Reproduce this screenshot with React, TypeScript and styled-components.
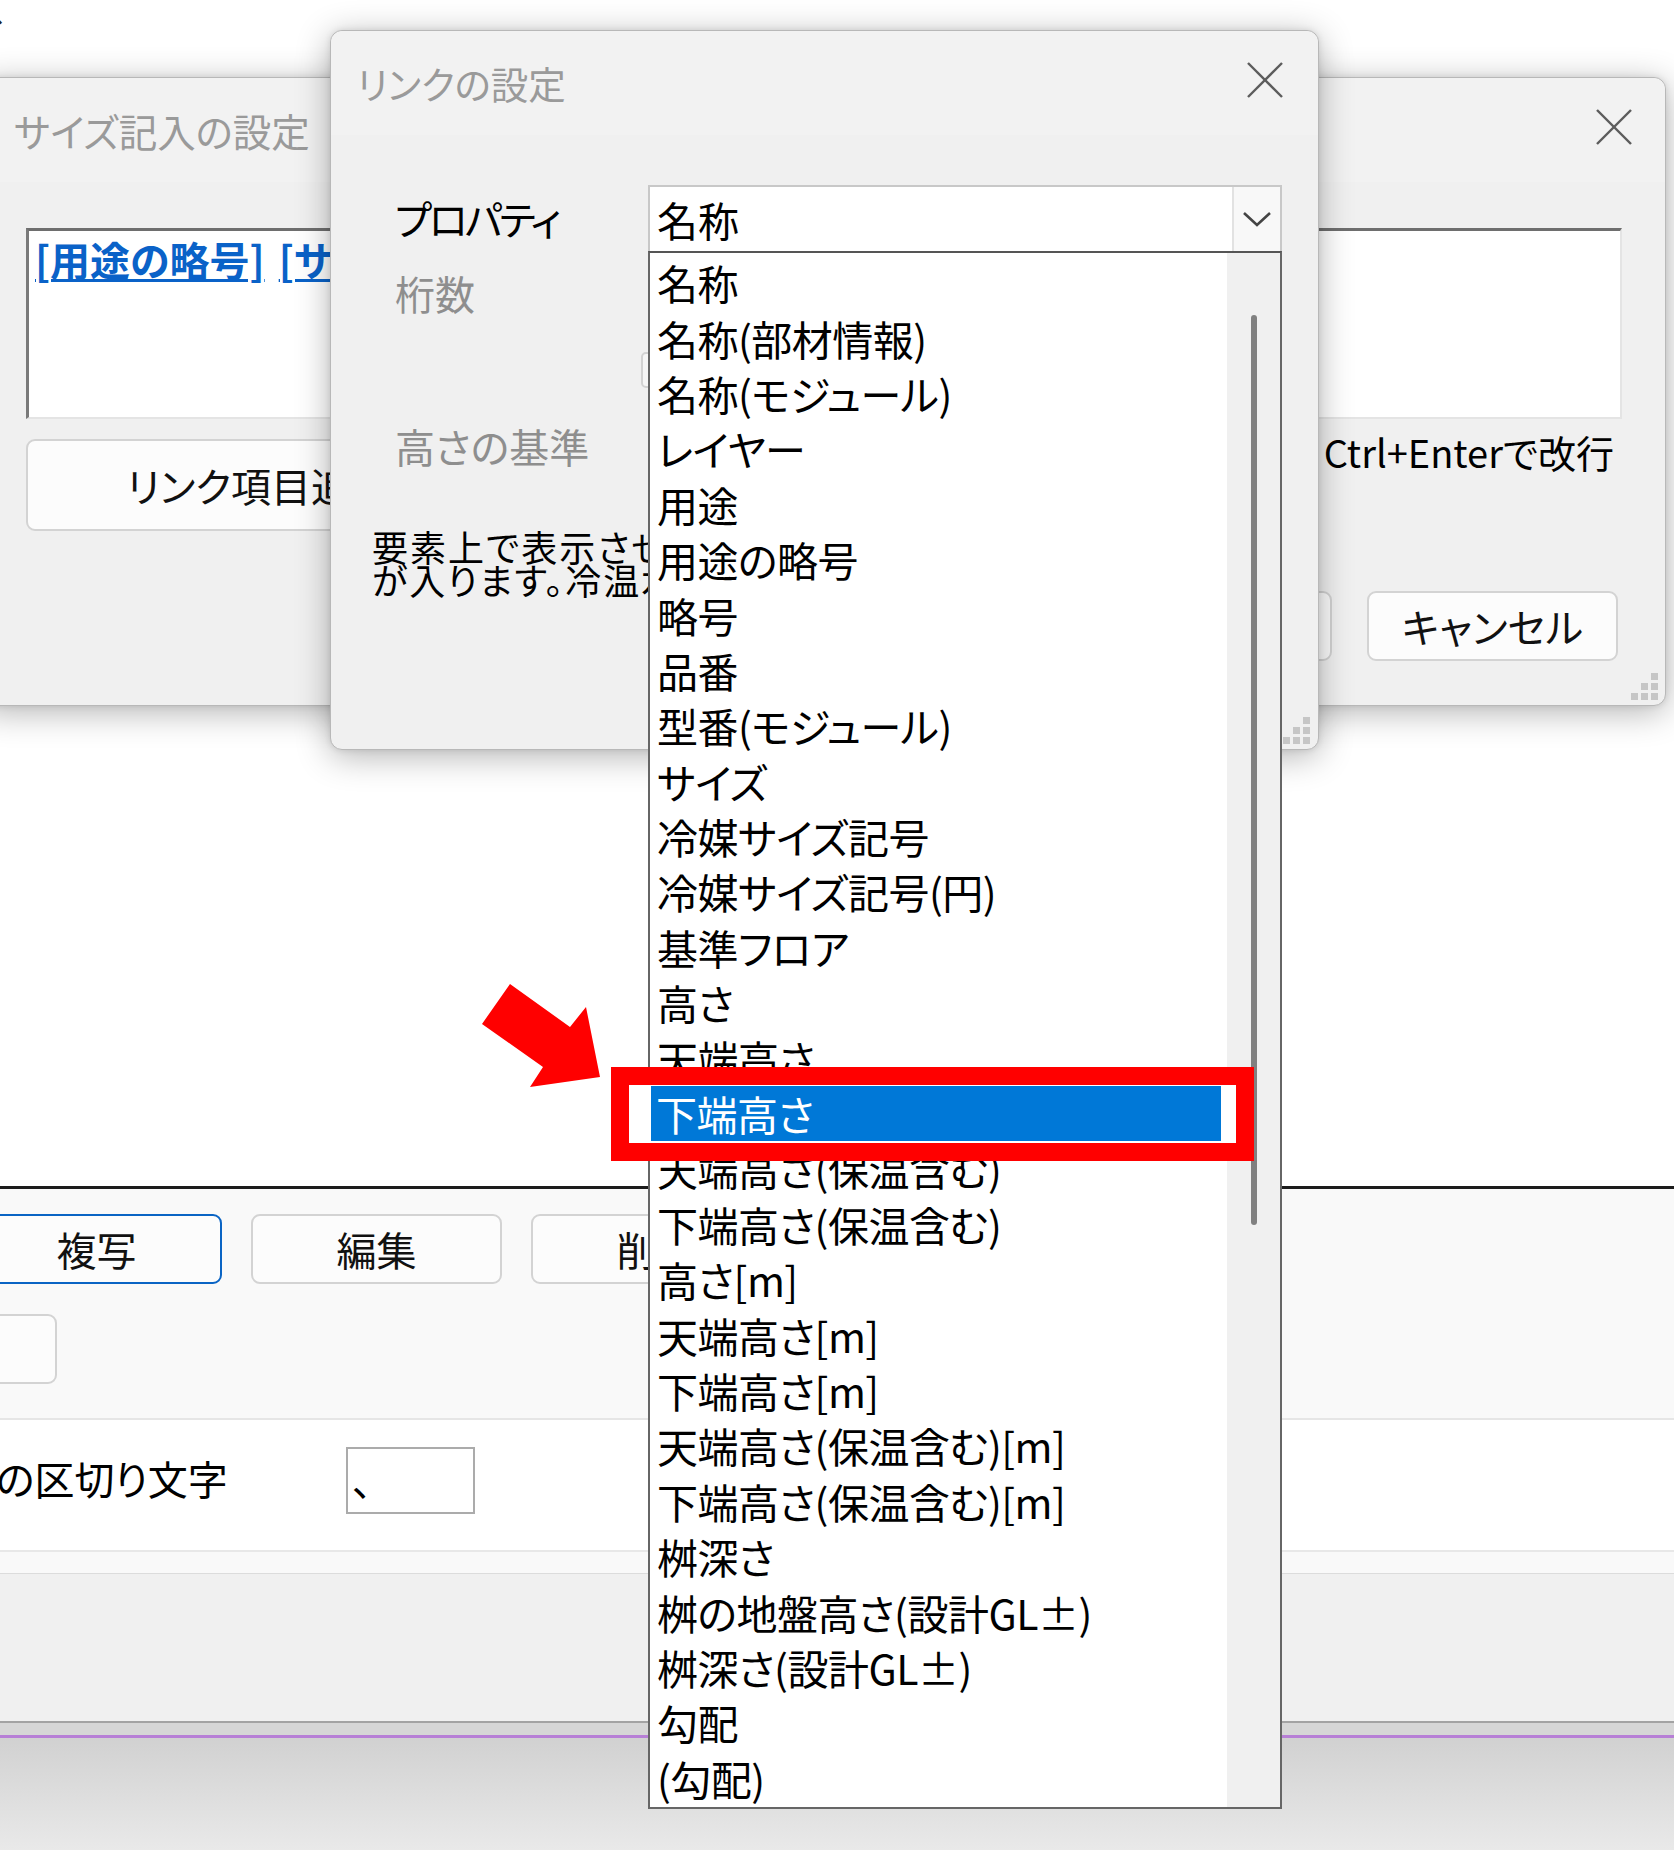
import React from 'react';
import styled, { createGlobalStyle } from 'styled-components';

const GlobalStyle = createGlobalStyle`
  html, body { margin: 0; padding: 0; }
  body {
    width: 1674px; height: 1850px; overflow: hidden; background: #ffffff;
    font-family: "Noto Sans CJK JP", "Noto Sans", sans-serif;
    font-feature-settings: "palt" 1;
    color: #000;
  }
  #root { width: 1674px; height: 1850px; }
  * { box-sizing: border-box; }
`;

const Page = styled.div`
  width: 1674px; height: 1850px; display: flex; flex-direction: column;
  overflow: hidden; background: #ffffff;
`;

const Desktop = styled.div`
  position: relative; z-index: 2; flex: none; height: 1186px; background: #ffffff;
`;

const StrayMark = styled.div`
  font-size: 30px; line-height: 1; color: #222; margin: -6px 0 0 -8px;
`;

/* ---------- dialogs ---------- */
const Dialog = styled.div<{ $left: number; $top: number; $w: number; $h: number; $z: number }>`
  position: absolute;
  left: ${p => p.$left}px; top: ${p => p.$top}px;
  width: ${p => p.$w}px; height: ${p => p.$h}px;
  z-index: ${p => p.$z};
  background: #f0f0f0;
  border: 1px solid #b8b8b8;
  border-radius: 12px;
  box-shadow: 0 6px 34px rgba(0, 0, 0, 0.30), 0 0 6px rgba(0, 0, 0, 0.10);
  display: flex; flex-direction: column;
`;

const TitleBar = styled.div<{ $pl: number; $pr: number }>`
  flex: none; height: 104px; display: flex; align-items: center; justify-content: space-between;
  padding: 0 ${p => p.$pr}px 0 ${p => p.$pl}px;
  background: #f2f2f2; border-radius: 12px 12px 0 0;
`;

const TitleText = styled.div<{ $size: number }>`
  font-size: ${p => p.$size}px; color: #9a9a9a; line-height: 1; white-space: nowrap;
`;

const CloseGlyph = () => (
  <svg width="40" height="38" viewBox="0 0 40 38">
    <line x1="3" y1="2" x2="37" y2="36" stroke="#5c5c5c" strokeWidth="2.4" />
    <line x1="37" y1="2" x2="3" y2="36" stroke="#5c5c5c" strokeWidth="2.4" />
  </svg>
);

const CloseButton = styled.div`
  display: flex; align-items: center; justify-content: center; margin-top: -6px;
`;

const Grip = styled.div<{ $r: number; $b: number }>`
  position: absolute; right: ${p => p.$r}px; bottom: ${p => p.$b}px; width: 28px; height: 28px;
`;

const GripGlyph = () => (
  <svg width="28" height="28" viewBox="0 0 28 28">
    {[[20, 0], [20, 10], [10, 10], [20, 20], [10, 20], [0, 20]].map(([x, y]) => (
      <rect key={`${x}-${y}`} x={x} y={y} width="7" height="7" fill="#c6c6c6" />
    ))}
  </svg>
);

/* ---------- back dialog (サイズ記入の設定) ---------- */
const BackContent = styled.div`
  flex: 1; display: flex; flex-direction: column; padding: 46px 43px 0 45px;
`;

const EditBox = styled.div`
  height: 191px; background: #ffffff;
  border-top: 3px solid #6e6e6e; border-left: 3px solid #7a7a7a;
  border-right: 2px solid #e4e4e4; border-bottom: 2px solid #e4e4e4;
  padding: 6px 0 0 6px; font-size: 40px; line-height: 44px; white-space: nowrap; overflow: hidden;
`;

const LinkTag = styled.span`
  color: #0a62c8; font-weight: 700; text-decoration: underline; text-underline-offset: 3px;
  text-decoration-thickness: 3px; margin-right: 14px;
`;

const ActionRow = styled.div`
  margin-top: 20px; display: flex; justify-content: space-between; align-items: flex-start;
`;

const PushButton = styled.div<{ $w: number; $h: number; $focus?: boolean }>`
  flex: none; width: ${p => p.$w}px; height: ${p => p.$h}px;
  display: flex; align-items: center; justify-content: center;
  background: #fcfcfc;
  border: 2px solid ${p => (p.$focus ? '#0a64c4' : '#d3d3d3')};
  border-radius: 9px; font-size: 40px; line-height: 1; white-space: nowrap; color: #111;
`;

const HintText = styled.div`
  font-size: 38px; line-height: 44px; margin: -9px 8px 0 0; white-space: nowrap;
`;

const FooterRow = styled.div`
  margin-top: 60px; display: flex; justify-content: flex-end; gap: 35px; padding-right: 4px;
`;

/* ---------- front dialog (リンクの設定) ---------- */
const FrontBody = styled.div`
  flex: 1; display: flex; flex-direction: column; padding: 50px 0 0 41px;
`;

const FormGrid = styled.div`
  margin-left: 23px; display: grid; grid-template-columns: 253px 634px;
  grid-template-rows: 66px 66px 70px 64px; row-gap: 9px;
`;

const FieldLabel = styled.div<{ $disabled?: boolean; $tight?: boolean }>`
  align-self: center; font-size: 40px; line-height: 1; white-space: nowrap;
  letter-spacing: ${p => (p.$tight ? '-3px' : '0')};
  color: ${p => (p.$disabled ? '#8e8e8e' : '#000')};
`;

const ComboBox = styled.div`
  display: flex; height: 66px; background: #ffffff; border: 2px solid #c8c8c8; border-bottom: none;
`;

const ComboValue = styled.div`
  flex: 1; display: flex; align-items: center; padding-left: 7px; font-size: 41px; line-height: 1;
`;

const ComboArrow = styled.div`
  flex: none; width: 48px; display: flex; align-items: center; justify-content: center;
  background: #f8f8f8; border-left: 2px solid #e2e2e2;
`;

const Chevron = () => (
  <svg width="30" height="17" viewBox="0 0 30 17">
    <polyline points="2,2 15,14 28,2" fill="none" stroke="#444" strokeWidth="2.6" />
  </svg>
);

const DisabledField = styled.div`
  align-self: center; margin-left: -7px; width: 220px; height: 36px;
  background: #f6f6f6; border: 2px solid #d2d2d2; border-radius: 5px;
`;

const Description = styled.div`
  margin-top: 52px; font-size: 36px; letter-spacing: 2px; line-height: 33px; white-space: nowrap;
`;

/* ---------- dropdown popup ---------- */
const DropList = styled.div`
  position: absolute; z-index: 5; left: 648px; top: 251px; width: 634px; height: 1558px;
  background: #ffffff; border: 2px solid #666; border-top-color: #555;
  display: flex;
`;

const ItemColumn = styled.div`
  flex: 1; padding: 2px 4px 2px 2px; display: flex; flex-direction: column;
`;

const ListItem = styled.div<{ $selected?: boolean }>`
  flex: none; height: 55.4px; display: flex; align-items: center; padding-left: 5px;
  font-size: 41px; line-height: 1; white-space: nowrap; letter-spacing: -0.5px;
  background: ${p => (p.$selected ? '#0078d7' : 'transparent')};
  color: ${p => (p.$selected ? '#fff' : '#000')};
`;

const ScrollTrack = styled.div`
  flex: none; width: 53px; background: #f0f0f0; display: flex; justify-content: center; padding-top: 62px;
`;

const ScrollThumb = styled.div`
  width: 6px; height: 910px; background: #808080; border-radius: 3px;
`;

/* ---------- annotation ---------- */
const Highlight = styled.div`
  position: absolute; z-index: 6; left: 611px; top: 1067px; width: 643px;
  border: 18px solid #ff0000; background: #ffffff; padding: 1px 15px 2px 22px;
`;

const HighlightBar = styled.div`
  height: 55.4px; background: #0078d7; color: #fff; display: flex; align-items: center;
  padding-left: 5px; font-size: 41px; line-height: 1; white-space: nowrap; letter-spacing: -0.5px;
`;

const ArrowMark = styled.svg`
  position: absolute; z-index: 6; left: 470px; top: 975px;
`;

/* ---------- base window below ---------- */
const Band = styled.div<{ $h: number; $bg: string }>`
  flex: none; height: ${p => p.$h}px; background: ${p => p.$bg};
`;

const CommandPanel = styled.div`
  flex: none; background: #f9f9f9; padding: 25px 0 34px; display: flex; flex-direction: column; gap: 30px;
`;

const CommandRow = styled.div<{ $shift: number }>`
  display: flex; gap: 29px; margin-left: ${p => p.$shift}px;
`;

const FieldRow = styled.div`
  flex: none; height: 130px; background: #ffffff; display: flex; align-items: center;
`;

const RowLabel = styled.div`
  flex: none; width: 470px; margin-left: -124px; font-size: 40px; line-height: 1;
  white-space: nowrap; margin-top: -14px;
`;

const SmallInput = styled.div`
  flex: none; width: 129px; height: 67px; background: #ffffff; border: 2px solid #ababab;
  font-size: 40px; line-height: 60px; padding-left: 4px; margin-top: -9px;
`;

const FillArea = styled.div`
  flex: 1; background: linear-gradient(#d1d1d1, #e9e9e9);
`;

const items = [
  '名称', '名称(部材情報)', '名称(モジュール)', 'レイヤー', '用途', '用途の略号', '略号', '品番',
  '型番(モジュール)', 'サイズ', '冷媒サイズ記号', '冷媒サイズ記号(円)', '基準フロア', '高さ', '天端高さ',
  '下端高さ', '天端高さ(保温含む)', '下端高さ(保温含む)', '高さ[m]', '天端高さ[m]', '下端高さ[m]',
  '天端高さ(保温含む)[m]', '下端高さ(保温含む)[m]', '桝深さ', '桝の地盤高さ(設計GL±)', '桝深さ(設計GL±)',
  '勾配', '(勾配)',
];
const SELECTED = 15;

export default function App() {
  return (
    <>
      <GlobalStyle />
      <Page>
        <Desktop>
          <StrayMark>、</StrayMark>

          <Dialog $left={-20} $top={77} $w={1686} $h={629} $z={1}>
            <TitleBar $pl={33} $pr={31}>
              <TitleText $size={38.5}>サイズ記入の設定</TitleText>
              <CloseButton><CloseGlyph /></CloseButton>
            </TitleBar>
            <BackContent>
              <EditBox>
                <LinkTag>[用途の略号]</LinkTag>
                <LinkTag>[サイズ]</LinkTag>
              </EditBox>
              <ActionRow>
                <PushButton $w={466} $h={92}>リンク項目追加</PushButton>
                <HintText>Ctrl+Enterで改行</HintText>
              </ActionRow>
              <FooterRow>
                <PushButton $w={251} $h={70}>OK</PushButton>
                <PushButton $w={251} $h={70}>キャンセル</PushButton>
              </FooterRow>
            </BackContent>
            <Grip $r={6} $b={4}><GripGlyph /></Grip>
          </Dialog>

          <Dialog $left={330} $top={30} $w={989} $h={720} $z={2}>
            <TitleBar $pl={26} $pr={33}>
              <TitleText $size={37.5}>リンクの設定</TitleText>
              <CloseButton><CloseGlyph /></CloseButton>
            </TitleBar>
            <FrontBody>
              <FormGrid>
                <FieldLabel $tight>プロパティ</FieldLabel>
                <ComboBox>
                  <ComboValue>名称</ComboValue>
                  <ComboArrow><Chevron /></ComboArrow>
                </ComboBox>
                <FieldLabel $disabled>桁数</FieldLabel>
                <div />
                <div />
                <DisabledField />
                <FieldLabel $disabled>高さの基準</FieldLabel>
                <div />
              </FormGrid>
              <Description>
                要素上で表示させるプロパティの値<br />
                が入ります。冷温水管の場合は
              </Description>
            </FrontBody>
            <Grip $r={7} $b={4}><GripGlyph /></Grip>
          </Dialog>

          <DropList>
            <ItemColumn>
              {items.map((t, i) => (
                <ListItem key={t} $selected={i === SELECTED}>{t}</ListItem>
              ))}
            </ItemColumn>
            <ScrollTrack><ScrollThumb /></ScrollTrack>
          </DropList>

          <Highlight>
            <HighlightBar>{items[SELECTED]}</HighlightBar>
          </Highlight>

          <ArrowMark width="140" height="120" viewBox="0 0 140 120">
            <polygon points="40,9 100,52 116,32 130,102 60,112 73,92 12,49" fill="#ff0000" />
          </ArrowMark>
        </Desktop>

        <Band $h={3} $bg="#1c1c1c" />
        <CommandPanel>
          <CommandRow $shift={-29}>
            <PushButton $w={251} $h={70} $focus>複写</PushButton>
            <PushButton $w={251} $h={70}>編集</PushButton>
            <PushButton $w={251} $h={70}>削除</PushButton>
          </CommandRow>
          <CommandRow $shift={-43}>
            <PushButton $w={100} $h={70} />
          </CommandRow>
        </CommandPanel>
        <Band $h={2} $bg="#e6e6e6" />
        <FieldRow>
          <RowLabel>項目間の区切り文字</RowLabel>
          <SmallInput>、</SmallInput>
        </FieldRow>
        <Band $h={2} $bg="#e8e8e8" />
        <Band $h={21} $bg="#f9f9f9" />
        <Band $h={1} $bg="#dcdcdc" />
        <Band $h={147} $bg="#f0f0f0" />
        <Band $h={2} $bg="#a3a3a3" />
        <Band $h={12} $bg="#d6d6d6" />
        <Band $h={3} $bg="#b77fd6" />
        <FillArea />
      </Page>
    </>
  );
}
